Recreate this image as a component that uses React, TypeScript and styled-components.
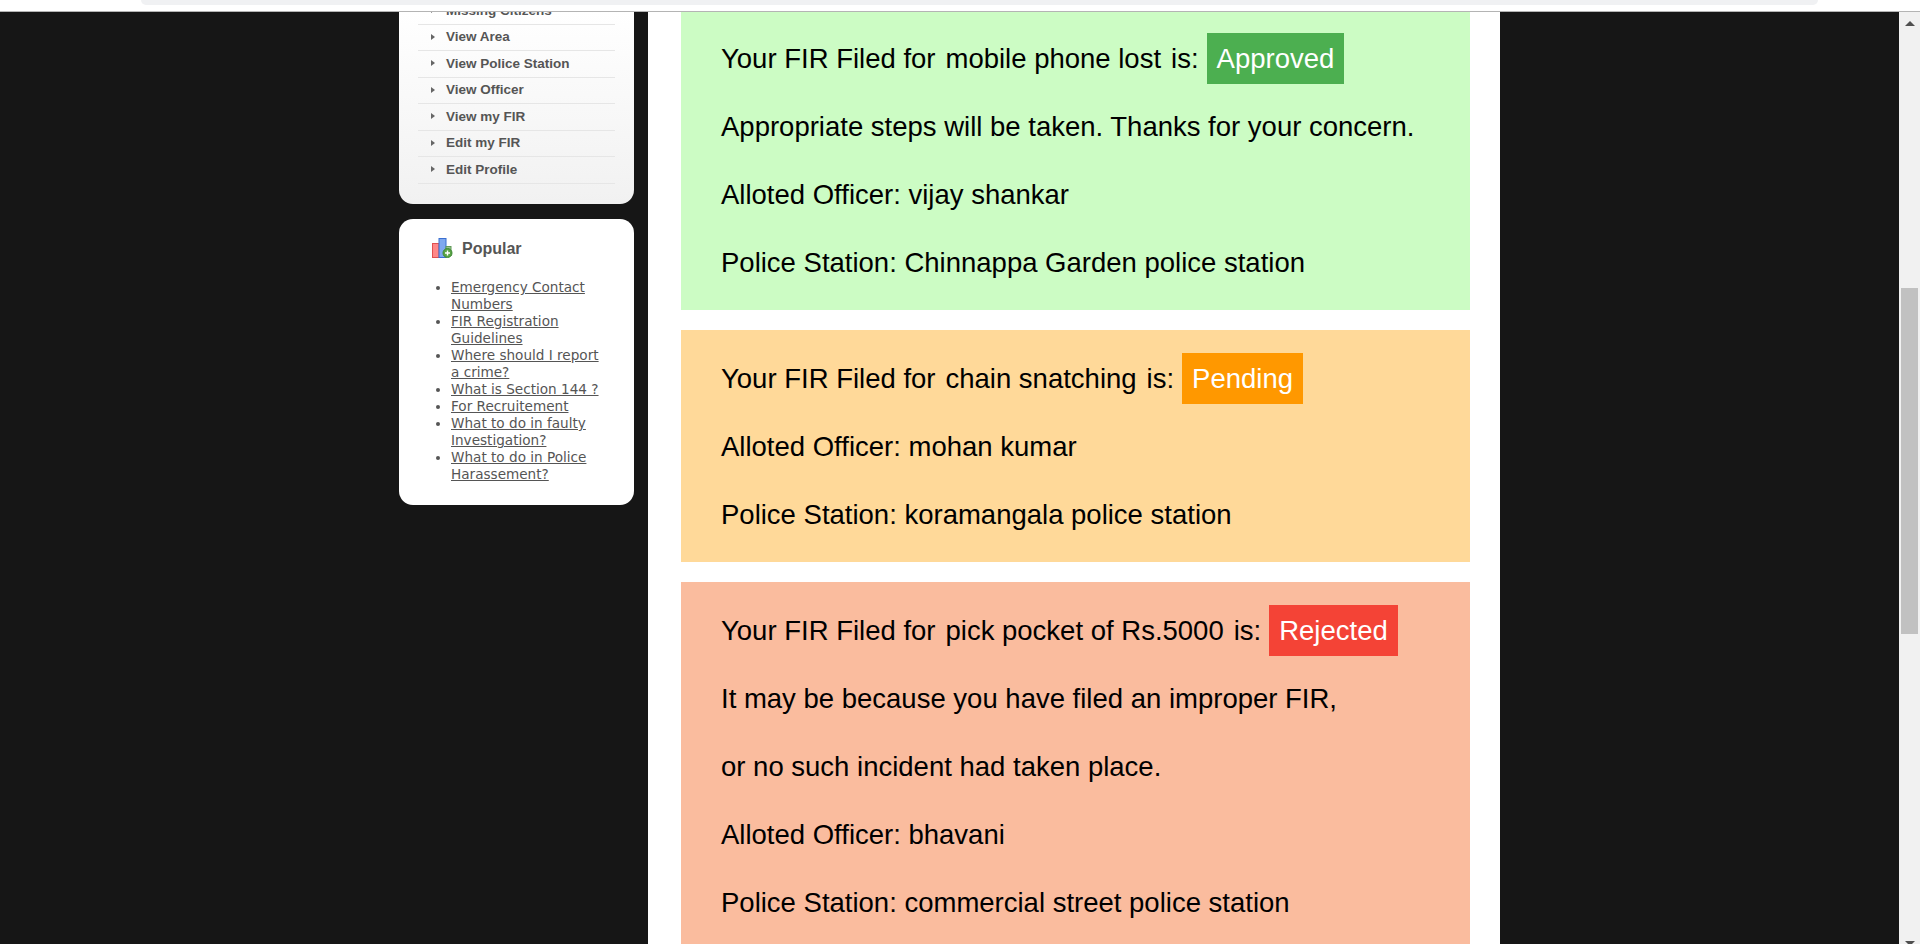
import React from "react";
import styled, { createGlobalStyle } from "styled-components";

const Global = createGlobalStyle`
  html, body { margin: 0; padding: 0; height: 100%; overflow: hidden; background: #161616; }
  #root { height: 944px; }
  * { box-sizing: border-box; }
`;

const Frame = styled.div`
  width: 1920px;
  height: 944px;
  display: flex;
  flex-direction: column;
  overflow: hidden;
  background: #161616;
`;

const TopStrip = styled.div`
  height: 12px;
  flex: none;
  background: #fff;
  border-bottom: 1px solid #b4b4b4;
  padding: 0 102px 0 141px;
`;

const AddressBar = styled.div`
  height: 5px;
  background: #f0f1f3;
  border-radius: 0 0 10px 10px;
`;

const Viewport = styled.div`
  flex: 1;
  min-height: 0;
  display: flex;
  overflow: hidden;
`;

const Page = styled.div`
  flex: 1;
  min-width: 0;
  display: flex;
  align-items: flex-start;
  padding-left: 399px;
  overflow: hidden;
`;

const Sidebar = styled.aside`
  width: 235px;
  flex: none;
  display: flex;
  flex-direction: column;
  gap: 15px;
  margin-right: 14px;
`;

const MenuPanel = styled.div`
  background: linear-gradient(#ffffff, #f1f1f1);
  border-radius: 0 0 14px 14px;
  padding: 0 19px 20px 19px;
  height: 192px;
`;

const MenuList = styled.ul`
  list-style: none;
  margin: -14px 0 0;
  padding: 0;
`;

const MenuRow = styled.li`
  height: 26.5px;
  border-bottom: 1px solid #e6e6e6;
  display: flex;
  align-items: center;
  gap: 11px;
  padding: 0 0 1px 13px;
  font: bold 13.5px/1 "Liberation Sans", Arial, sans-serif;
  color: #555;
`;

const Arrow = styled.span`
  width: 0;
  height: 0;
  border-left: 4px solid #666;
  border-top: 3px solid transparent;
  border-bottom: 3px solid transparent;
`;

const PopularPanel = styled.div`
  background: #fff;
  border-radius: 14px;
  height: 286px;
  padding: 19px 28px 0 33px;
`;

const PopularHead = styled.div`
  display: flex;
  align-items: center;
  gap: 9px;
  font: bold 16px/20px "Liberation Sans", Arial, sans-serif;
  color: #555;
`;

const PopularList = styled.ul`
  margin: 19px 0 0;
  padding: 0 0 0 19px;
  font: 13.6px/17px "DejaVu Sans", Verdana, sans-serif;
  color: #555;
`;

const PopularLink = styled.a`
  color: #555;
  text-decoration: underline;
`;

const Main = styled.main`
  width: 852px;
  height: 1000px;
  flex: none;
  background: #fff;
  padding: 0 30px 0 33px;
  display: flex;
  flex-direction: column;
  gap: 20px;
`;

const Card = styled.section<{ $bg: string; $h: number }>`
  background: ${(p) => p.$bg};
  height: ${(p) => p.$h}px;
  padding: 14px 40px 0;
  flex: none;
  &:first-child {
    margin-top: -2px;
  }
`;

const Line = styled.div`
  height: 68px;
  display: flex;
  align-items: center;
  font: 27.5px/31px "Liberation Sans", Arial, sans-serif;
  color: #000;
  white-space: pre;
`;

const Gap = styled.span`
  width: 10px;
`;

const Badge = styled.span<{ $bg: string }>`
  background: ${(p) => p.$bg};
  color: #fff;
  padding: 10px;
  line-height: 31px;
  margin-left: 8px;
`;

const Scrollbar = styled.div`
  width: 21px;
  flex: none;
  background: #f1f1f1;
  display: flex;
  flex-direction: column;
  align-items: center;
`;

const UpArrow = styled.span`
  margin-top: 9px;
  width: 0;
  height: 0;
  border-left: 5px solid transparent;
  border-right: 5px solid transparent;
  border-bottom: 5px solid #505050;
`;

const Thumb = styled.div`
  margin-top: 262px;
  width: 17px;
  height: 346px;
  background: #c1c1c1;
`;

const DownArrow = styled.span`
  flex: none;
  margin-top: auto;
  margin-bottom: -2px;
  width: 0;
  height: 0;
  border-left: 5px solid transparent;
  border-right: 5px solid transparent;
  border-top: 5px solid #505050;
`;

const MENU = ["Missing Citizens", "View Area", "View Police Station", "View Officer", "View my FIR", "Edit my FIR", "Edit Profile"];
const LINKS = [
  "Emergency Contact Numbers",
  "FIR Registration Guidelines",
  "Where should I report a crime?",
  "What is Section 144 ?",
  "For Recruitement",
  "What to do in faulty Investigation?",
  "What to do in Police Harassement?",
];

const ChartIcon = () => (
  <svg width="21" height="22" viewBox="0 0 21 22" aria-hidden="true">
    <rect x="0.5" y="5.5" width="6.5" height="14" fill="#f88" stroke="#e05050" />
    <rect x="7" y="0.5" width="7" height="19" fill="#7fa8ee" stroke="#3a6fd0" />
    <rect x="14" y="8.5" width="5" height="9" fill="#9bbf8c" stroke="#5f9a58" />
    <circle cx="15.5" cy="15" r="4.5" fill="#5aa345" stroke="#3f8a35" />
    <path d="M13 15h5M15.5 12.5v5" stroke="#fff" strokeWidth="1.4" />
  </svg>
);

const Status = ({ what, label, bg }: { what: string; label: string; bg: string }) => (
  <Line>
    Your FIR Filed for<Gap />
    {what}<Gap />
    is:
    <Badge $bg={bg}>{label}</Badge>
  </Line>
);

export default function App() {
  return (
    <Frame>
      <Global />
      <TopStrip>
        <AddressBar />
      </TopStrip>
      <Viewport>
        <Page>
          <Sidebar>
            <MenuPanel>
              <MenuList>
                {MENU.map((m) => (
                  <MenuRow key={m}>
                    <Arrow />
                    {m}
                  </MenuRow>
                ))}
              </MenuList>
            </MenuPanel>
            <PopularPanel>
              <PopularHead>
                <ChartIcon />
                Popular
              </PopularHead>
              <PopularList>
                {LINKS.map((l) => (
                  <li key={l}>
                    <PopularLink>{l}</PopularLink>
                  </li>
                ))}
              </PopularList>
            </PopularPanel>
          </Sidebar>
          <Main>
            <Card $bg="#ccfcc4" $h={300}>
              <Status what="mobile phone lost" label="Approved" bg="#4caf50" />
              <Line>Appropriate steps will be taken. Thanks for your concern.</Line>
              <Line>Alloted Officer: vijay shankar</Line>
              <Line>Police Station: Chinnappa Garden police station</Line>
            </Card>
            <Card $bg="#ffd999" $h={232}>
              <Status what="chain snatching" label="Pending" bg="#ff9800" />
              <Line>Alloted Officer: mohan kumar</Line>
              <Line>Police Station: koramangala police station</Line>
            </Card>
            <Card $bg="#fabc9e" $h={400}>
              <Status what="pick pocket of Rs.5000" label="Rejected" bg="#f44336" />
              <Line>It may be because you have filed an improper FIR,</Line>
              <Line>or no such incident had taken place.</Line>
              <Line>Alloted Officer: bhavani</Line>
              <Line>Police Station: commercial street police station</Line>
            </Card>
          </Main>
        </Page>
        <Scrollbar>
          <UpArrow />
          <Thumb />
          <DownArrow />
        </Scrollbar>
      </Viewport>
    </Frame>
  );
}
